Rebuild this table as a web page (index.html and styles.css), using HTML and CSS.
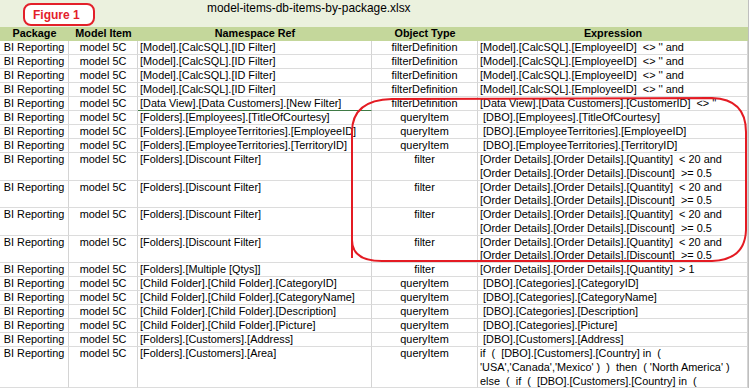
FILE: index.html
```html
<!DOCTYPE html>
<html>
<head>
<meta charset="utf-8">
<link rel="stylesheet" href="styles.css">
</head>
<body>
<div class="sheet">
  <div class="banner">
    <div class="fig">Figure 1</div>
    <div class="title">model-items-db-items-by-package.xlsx</div>
  </div>
  <div class="row head">
    <div class="c">Package</div><div class="c">Model Item</div><div class="c">Namespace Ref</div><div class="c">Object Type</div><div class="c">Expression</div>
  </div>
  <div class="row"><div class="c">BI Reporting</div><div class="c">model 5C</div><div class="l">[Model].[CalcSQL].[ID Filter]</div><div class="c">filterDefinition</div><div class="l">[Model].[CalcSQL].[EmployeeID]  &lt;&gt; '' and</div></div>
  <div class="row"><div class="c">BI Reporting</div><div class="c">model 5C</div><div class="l">[Model].[CalcSQL].[ID Filter]</div><div class="c">filterDefinition</div><div class="l">[Model].[CalcSQL].[EmployeeID]  &lt;&gt; '' and</div></div>
  <div class="row"><div class="c">BI Reporting</div><div class="c">model 5C</div><div class="l">[Model].[CalcSQL].[ID Filter]</div><div class="c">filterDefinition</div><div class="l">[Model].[CalcSQL].[EmployeeID]  &lt;&gt; '' and</div></div>
  <div class="row"><div class="c">BI Reporting</div><div class="c">model 5C</div><div class="l">[Model].[CalcSQL].[ID Filter]</div><div class="c">filterDefinition</div><div class="l">[Model].[CalcSQL].[EmployeeID]  &lt;&gt; '' and</div></div>
  <div class="row"><div class="c">BI Reporting</div><div class="c">model 5C</div><div class="l active">[Data View].[Data Customers].[New Filter]</div><div class="c">filterDefinition</div><div class="l">[Data View].[Data Customers].[CustomerID]  &lt;&gt; ''</div></div>
  <div class="row"><div class="c">BI Reporting</div><div class="c">model 5C</div><div class="l">[Folders].[Employees].[TitleOfCourtesy]</div><div class="c">queryItem</div><div class="l"> [DBO].[Employees].[TitleOfCourtesy]</div></div>
  <div class="row"><div class="c">BI Reporting</div><div class="c">model 5C</div><div class="l">[Folders].[EmployeeTerritories].[EmployeeID]</div><div class="c">queryItem</div><div class="l"> [DBO].[EmployeeTerritories].[EmployeeID]</div></div>
  <div class="row"><div class="c">BI Reporting</div><div class="c">model 5C</div><div class="l">[Folders].[EmployeeTerritories].[TerritoryID]</div><div class="c">queryItem</div><div class="l"> [DBO].[EmployeeTerritories].[TerritoryID]</div></div>
  <div class="row r2"><div class="c">BI Reporting</div><div class="c">model 5C</div><div class="l">[Folders].[Discount Filter]</div><div class="c">filter</div><div class="l">[Order Details].[Order Details].[Quantity]  &lt; 20 and
[Order Details].[Order Details].[Discount]  &gt;= 0.5</div></div>
  <div class="row r2"><div class="c">BI Reporting</div><div class="c">model 5C</div><div class="l">[Folders].[Discount Filter]</div><div class="c">filter</div><div class="l">[Order Details].[Order Details].[Quantity]  &lt; 20 and
[Order Details].[Order Details].[Discount]  &gt;= 0.5</div></div>
  <div class="row r2"><div class="c">BI Reporting</div><div class="c">model 5C</div><div class="l">[Folders].[Discount Filter]</div><div class="c">filter</div><div class="l">[Order Details].[Order Details].[Quantity]  &lt; 20 and
[Order Details].[Order Details].[Discount]  &gt;= 0.5</div></div>
  <div class="row r2"><div class="c">BI Reporting</div><div class="c">model 5C</div><div class="l">[Folders].[Discount Filter]</div><div class="c">filter</div><div class="l">[Order Details].[Order Details].[Quantity]  &lt; 20 and
[Order Details].[Order Details].[Discount]  &gt;= 0.5</div></div>
  <div class="row"><div class="c">BI Reporting</div><div class="c">model 5C</div><div class="l">[Folders].[Multiple [Qtys]]</div><div class="c">filter</div><div class="l">[Order Details].[Order Details].[Quantity]  &gt; 1</div></div>
  <div class="row"><div class="c">BI Reporting</div><div class="c">model 5C</div><div class="l">[Child Folder].[Child Folder].[CategoryID]</div><div class="c">queryItem</div><div class="l"> [DBO].[Categories].[CategoryID]</div></div>
  <div class="row"><div class="c">BI Reporting</div><div class="c">model 5C</div><div class="l">[Child Folder].[Child Folder].[CategoryName]</div><div class="c">queryItem</div><div class="l"> [DBO].[Categories].[CategoryName]</div></div>
  <div class="row"><div class="c">BI Reporting</div><div class="c">model 5C</div><div class="l">[Child Folder].[Child Folder].[Description]</div><div class="c">queryItem</div><div class="l"> [DBO].[Categories].[Description]</div></div>
  <div class="row"><div class="c">BI Reporting</div><div class="c">model 5C</div><div class="l">[Child Folder].[Child Folder].[Picture]</div><div class="c">queryItem</div><div class="l"> [DBO].[Categories].[Picture]</div></div>
  <div class="row"><div class="c">BI Reporting</div><div class="c">model 5C</div><div class="l">[Folders].[Customers].[Address]</div><div class="c">queryItem</div><div class="l"> [DBO].[Customers].[Address]</div></div>
  <div class="row r3"><div class="c">BI Reporting</div><div class="c">model 5C</div><div class="l">[Folders].[Customers].[Area]</div><div class="c">queryItem</div><div class="l">if  (  [DBO].[Customers].[Country] in  (
'USA','Canada','Mexico' )  )  then  ( 'North America' )
else  (  if  (  [DBO].[Customers].[Country] in  (</div></div>
  <svg class="mark" width="750" height="388" viewBox="0 0 750 388">
    <path d="M352 258 L352 132 Q352 100 392 99 L712 98 Q746 99 746 132 L746 230 Q745 260 712 261 L382 261 Q352 261 352 240" fill="none" stroke="#e41b23" stroke-width="2"/>
  </svg>
</div>
</body>
</html>
```
FILE: styles.css
```css
body {
  margin: 0;
  background: #ffffff;
  font-family: "Liberation Sans", Arial, sans-serif;
  color: #000;
}
.sheet {
  position: relative;
  width: 749px;
  height: 388px;
  overflow: hidden;
  border-right: 1px solid #bfbfbf;
  box-sizing: border-box;
}
.banner {
  height: 27px;
  background: #ebf1de;
  display: flex;
  align-items: flex-start;
}
.fig {
  margin: 3px 0 0 23px;
  width: 72px;
  height: 23px;
  box-sizing: border-box;
  border: 2px solid #e3202a;
  border-radius: 8px;
  background: #ffffff;
  color: #e3202a;
  font-weight: bold;
  font-size: 12px;
  display: flex;
  align-items: center;
  padding-left: 8px;
}
.title {
  margin-left: 112px;
  font-size: 11.9px;
  line-height: 16px;
}
.row {
  display: grid;
  grid-template-columns: 69px 69px 234px 106px 270px;
  height: 14px;
  font-size: 10.9px;
  line-height: 13.75px;
}
.row.r2 { height: 27.5px; }
.row.r3 { height: 41.25px; }
.row > div {
  box-sizing: border-box;
  border-right: 1px solid #d4d4d4;
  border-bottom: 1px solid #dcdcdc;
  white-space: pre;
  overflow: hidden;
}
.row .c { text-align: center; }
.row .l { padding-left: 2px; }
.row .active { border-bottom: 1px solid #3f7a45; }
.row.head {
  background: #c4d79b;
  font-weight: bold;
  font-size: 10.8px;
}
.row.head > div {
  border-right: none;
  border-bottom: 1px solid #c4d79b;
}
.mark {
  position: absolute;
  left: 0;
  top: 0;
  pointer-events: none;
}
```
